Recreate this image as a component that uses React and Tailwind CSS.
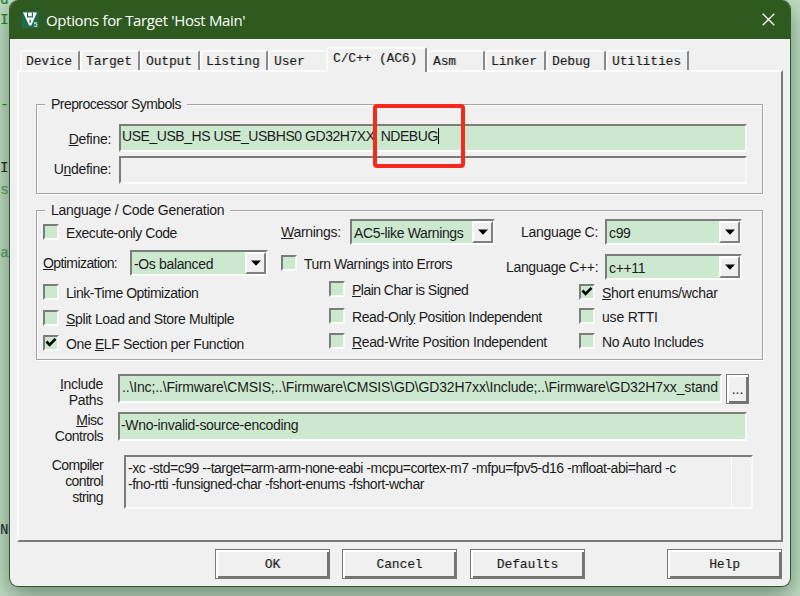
import clsx from 'clsx';

const SANS = "font-['Liberation_Sans',Arial,sans-serif]";
const MONO = "font-['Liberation_Mono','Courier_New',monospace] [text-shadow:1px_0_0_rgba(0,0,0,0.22)]";

const sunken = 'border-2 border-t-[#7c7c7c] border-l-[#7c7c7c] border-r-[#f8f8f8] border-b-[#fdfdfd]';

const tabs = [
  { label: 'Device', width: 'w-[60px]' },
  { label: 'Target', width: 'w-[60px]' },
  { label: 'Output', width: 'w-[60px]' },
  { label: 'Listing', width: 'w-[68px]' },
  { label: 'User', width: 'w-[58px]', noEdge: true },
  { label: 'C/C++ (AC6)', width: 'w-[101px]', active: true },
  { label: 'Asm', width: 'w-[58px]' },
  { label: 'Linker', width: 'w-[61px]' },
  { label: 'Debug', width: 'w-[60px]' },
  { label: 'Utilities', width: 'w-[83px]' },
];

function Tab({ label, width, active, noEdge }) {
  return (
    <div
      className={clsx(
        width,
        'box-border rounded-t-[2px] border-t-2 border-l-2 border-t-[#fafafa] border-l-[#fafafa] whitespace-pre text-[12.8px] tracking-[-0.03px]',
        active
          ? 'relative z-10 -mb-[2px] h-[25px] bg-[#f0f0f0] pl-[5px] leading-[20px]'
          : 'h-[20px] pl-[4px] leading-[20px]',
        !noEdge && 'border-r-2 border-r-[#8a8a8a]'
      )}
    >
      {label}
    </div>
  );
}

function Group({ title, className, legend, children }) {
  return (
    <fieldset className={clsx('border border-[#a3a3a3] shadow-[1px_1px_0_#fff,inset_1px_1px_0_#fff]', className)}>
      <legend className={clsx('ml-[8px] h-[18px] bg-[#f0f0f0] px-[6px] leading-[18px] whitespace-nowrap', legend)}>
        {title}
      </legend>
      {children}
    </fieldset>
  );
}

function Check({ checked, className, text, children }) {
  return (
    <label className={clsx('flex h-[16px] items-center whitespace-nowrap', className)}>
      <span className={clsx('flex h-[16px] w-[16px] shrink-0 items-center justify-center bg-[#cce8cf]', sunken)}>
        {checked && (
          <svg width="12" height="12" viewBox="0 0 12 12" fill="none">
            <path d="M1.5 4.5 L4.6 7.8 L10.5 1.8" stroke="#000" strokeWidth="2.6" />
          </svg>
        )}
      </span>
      <span className={clsx('ml-[7px]', text)}>{children}</span>
    </label>
  );
}

function Select({ value, className }) {
  return (
    <div className={clsx('flex h-[26px] bg-[#cce8cf]', sunken, className)}>
      <span className="flex-1 pl-[2px] leading-[24px] tracking-[-0.35px] whitespace-nowrap">{value}</span>
      <span className="flex h-[22px] w-[21px] items-center justify-center border-2 border-t-white border-l-white border-r-[#808080] border-b-[#808080] bg-[#f0f0f0]">
        <svg width="10" height="6" viewBox="0 0 10 6">
          <path d="M0 0.5 H10 L5 5.7 Z" fill="#000" />
        </svg>
      </span>
    </div>
  );
}

function DialogButton({ children, className }) {
  return (
    <button
      className={clsx(
        'h-[30px] w-[115px] border border-[#777] bg-[#f0f0f0] text-[12.8px] leading-[27px] shadow-[inset_2px_2px_0_#fff,inset_-2px_-2px_0_#747474]',
        MONO,
        className
      )}
    >
      {children}
    </button>
  );
}

// Slice of the editor that stays visible left of the dialog
function EditorStrip() {
  return (
    <div className={clsx('h-[596px] w-[9px] shrink-0 text-[14px] leading-[16px] text-[#1b8a1b]', MONO)}>
      <div className="-mt-[8px]">d</div>
      <div className="mt-[4px]">I</div>
      <div className="mt-[69px]">-</div>
      <div className="mt-[47px] text-[#222]">I</div>
      <div className="mt-[6px] text-[#5aa865]">s</div>
      <div className="mt-[47px] text-[#5aa865]">a</div>
      <div className="mt-[261px] text-[#1c3040]">N</div>
    </div>
  );
}

export default function App() {
  return (
    <div
      className={clsx(
        'flex h-[596px] w-[800px] overflow-hidden bg-[#c0dfc5] text-[14px] leading-[16px] text-[#1c1c1c]',
        SANS
      )}
    >
      <EditorStrip />
      <div className="box-border h-[587px] w-[782px] shrink-0 overflow-hidden rounded-[9px] border border-t-0 border-[#2f5a22] bg-[#f0f0f0] shadow-[0_8px_24px_rgba(20,50,25,0.5)]">
        {/* Title bar */}
        <div className="flex h-[39px] items-center bg-[#2e5a20] pl-[12px] text-white">
          <svg width="17" height="17" viewBox="0 0 17 17">
            <rect width="17" height="17" fill="#1f6b4c" />
            <path d="M1 1.5 H15 L9.3 14.5 H7.2 Z" fill="#fff" />
            <path d="M5.6 1.5 V6.5 M5.6 5.8 H10.2 M10.4 1.5 V6.5 M8.2 8.5 V12" stroke="#1f6b4c" strokeWidth="1.2" fill="none" />
            <text x="11.8" y="15.8" fontSize="6.5" fill="#fff">5</text>
          </svg>
          <span className="ml-[7px] flex-1 font-['Open_Sans','Noto_Sans',sans-serif] text-[15px] tracking-[-0.35px]">
            Options for Target 'Host Main'
          </span>
          <svg className="mr-[15px]" width="13" height="13" viewBox="0 0 13 13">
            <path d="M0.7 0.7 L12.3 12.3 M12.3 0.7 L0.7 12.3" stroke="#fff" strokeWidth="1.3" />
          </svg>
        </div>

        {/* Tab strip */}
        <div className={clsx('flex h-[31px] items-end pl-[10px]', MONO)}>
          {tabs.map((tab) => (
            <Tab key={tab.label} {...tab} />
          ))}
        </div>

        {/* Page */}
        <div className="ml-[7px] h-[472px] w-[766px] border-2 border-t-[#fcfcfc] border-l-[#fcfcfc] border-r-[#7c7c7c] border-b-[#7c7c7c] pt-[23px] pl-[17px]">
          <Group title="Preprocessor Symbols" className="h-[99px] w-[727px]" legend="tracking-[-0.55px]">
            <div className="mt-[11px] flex h-[28px]">
              <span className="w-[74px] pt-[7px] text-right tracking-[-0.3px]"><u>D</u>efine:</span>
              <div className={clsx('ml-[8px] flex h-[28px] w-[628px] bg-[#cce8cf] pl-[1px] leading-[21px] tracking-[-0.45px] whitespace-pre', sunken)}>
                USE_USB_HS USE_USBHS0 GD32H7XX
                <span className="relative ml-[6px]">
                  NDEBUG
                  <span className="absolute top-[2px] -right-[1px] h-[16px] w-px bg-black" />
                  <span className="absolute -top-[22px] -left-[8px] h-[64px] w-[92px] rounded-[4px] border-4 border-[#f42a1c]" />
                </span>
              </div>
            </div>
            <div className="mt-[4px] flex h-[28px]">
              <span className="w-[74px] pt-[5px] text-right tracking-[-0.3px]">U<u>n</u>define:</span>
              <div className={clsx('ml-[8px] h-[28px] w-[628px]', sunken)} />
            </div>
          </Group>

          <Group title="Language / Code Generation" className="mt-[7px] h-[159px] w-[727px]" legend="tracking-[-0.28px]">
            <div className="grid grid-cols-[238px_225px_1fr] pl-[6px]">
              <div>
                <Check className="mt-[5px]" text="pt-[2px] tracking-[-0.43px]">Execute-only Code</Check>
                <div className="mt-[10px] flex items-center whitespace-nowrap">
                  <span className="w-[87px] tracking-[-0.58px]"><u>O</u>ptimization:</span>
                  <Select value="-Os balanced" className="w-[138px]" />
                </div>
                <Check className="mt-[8px]" text="pt-[2px] tracking-[-0.47px]">Link-Time Optimization</Check>
                <Check className="mt-[10px]" text="pt-[2px] tracking-[-0.37px]"><u>S</u>plit Load and Store Multiple</Check>
                <Check checked className="mt-[9px]" text="pt-[2px] tracking-[-0.37px]">One <u>E</u>LF Section per Function</Check>
              </div>
              <div>
                <div className="flex items-center whitespace-nowrap">
                  <span className="w-[69px] tracking-[-0.3px]"><u>W</u>arnings:</span>
                  <Select value="AC5-like Warnings" className="w-[145px]" />
                </div>
                <Check className="mt-[10px]" text="pt-[2px] tracking-[-0.45px]">Turn Warnings into Errors</Check>
                <div className="pl-[48px]">
                  <Check className="mt-[10px]" text="pt-[1px] tracking-[-0.53px]"><u>P</u>lain Char is Signed</Check>
                  <Check className="mt-[11px]" text="pt-[1px] tracking-[-0.42px]">Read-Onl<u>y</u> Position Independent</Check>
                  <Check className="mt-[9px]" text="pt-[1px] tracking-[-0.36px]"><u>R</u>ead-Write Position Independent</Check>
                </div>
              </div>
              <div>
                <div className="flex items-center whitespace-nowrap">
                  <span className="w-[92px] text-right tracking-[-0.3px]">Language C:</span>
                  <Select value="c99" className="ml-[7px] w-[137px]" />
                </div>
                <div className="mt-[9px] flex items-center whitespace-nowrap">
                  <span className="w-[92px] text-right tracking-[-0.33px]">Language C++:</span>
                  <Select value="c++11" className="ml-[7px] w-[137px]" />
                </div>
                <div className="pl-[73px]">
                  <Check checked className="mt-[4px]" text="pt-[2px] tracking-[-0.3px]"><u>S</u>hort enums/wchar</Check>
                  <Check className="mt-[8px]" text="-ml-[1px] pt-[1px] tracking-[-0.2px]">use RTTI</Check>
                  <Check className="mt-[9px]" text="pt-[1px] tracking-[-0.27px]">No Auto Includes</Check>
                </div>
              </div>
            </div>
          </Group>

          {/* Paths and extra options */}
          <div className="mt-[14px] flex h-[32px]">
            <div className="w-[67px] pt-[2px] text-right tracking-[-0.3px]"><u>I</u>nclude<br />Paths</div>
            <div className={clsx('ml-[15px] h-[29px] w-[604px] overflow-hidden bg-[#cce8cf] pl-[2px] leading-[22px] tracking-[-0.15px] whitespace-nowrap', sunken)}>
              ..\Inc;..\Firmware\CMSIS;..\Firmware\CMSIS\GD\GD32H7xx\Include;..\Firmware\GD32H7xx_stand
            </div>
            <button className="ml-[4px] h-[30px] w-[23px] border border-[#777] leading-[26px] shadow-[inset_2px_2px_0_#fff,inset_-2px_-2px_0_#747474]">...</button>
          </div>
          <div className="mt-[6px] flex h-[32px]">
            <div className="w-[67px] text-right tracking-[-0.5px]"><u>M</u>isc<br />Controls</div>
            <div className={clsx('ml-[15px] h-[29px] w-[629px] bg-[#cce8cf] pl-[1px] leading-[23px] tracking-[-0.31px]', sunken)}>
              -Wno-invalid-source-encoding
            </div>
          </div>
          <div className="mt-[11px] flex h-[54px]">
            <div className="w-[67px] pt-[2px] text-right tracking-[-0.6px]">Compiler<br />control<br />string</div>
            <div className={clsx('ml-[21px] flex h-[54px] w-[629px]', sunken)}>
              <div className="w-[605px] pt-[3px] pl-[2px] tracking-[-0.48px] whitespace-nowrap">
                -xc -std=c99 --target=arm-arm-none-eabi -mcpu=cortex-m7 -mfpu=fpv5-d16 -mfloat-abi=hard -c
                <br />
                -fno-rtti -funsigned-char -fshort-enums -fshort-wchar
              </div>
              <div className="w-px bg-white" />
            </div>
          </div>
        </div>

        {/* Dialog buttons */}
        <div className="mt-[7px] flex pl-[205px]">
          <DialogButton>OK</DialogButton>
          <DialogButton className="ml-[12px]">Cancel</DialogButton>
          <DialogButton className="ml-[13px]">Defaults</DialogButton>
          <DialogButton className="ml-[82px]">Help</DialogButton>
        </div>
      </div>
    </div>
  );
}
